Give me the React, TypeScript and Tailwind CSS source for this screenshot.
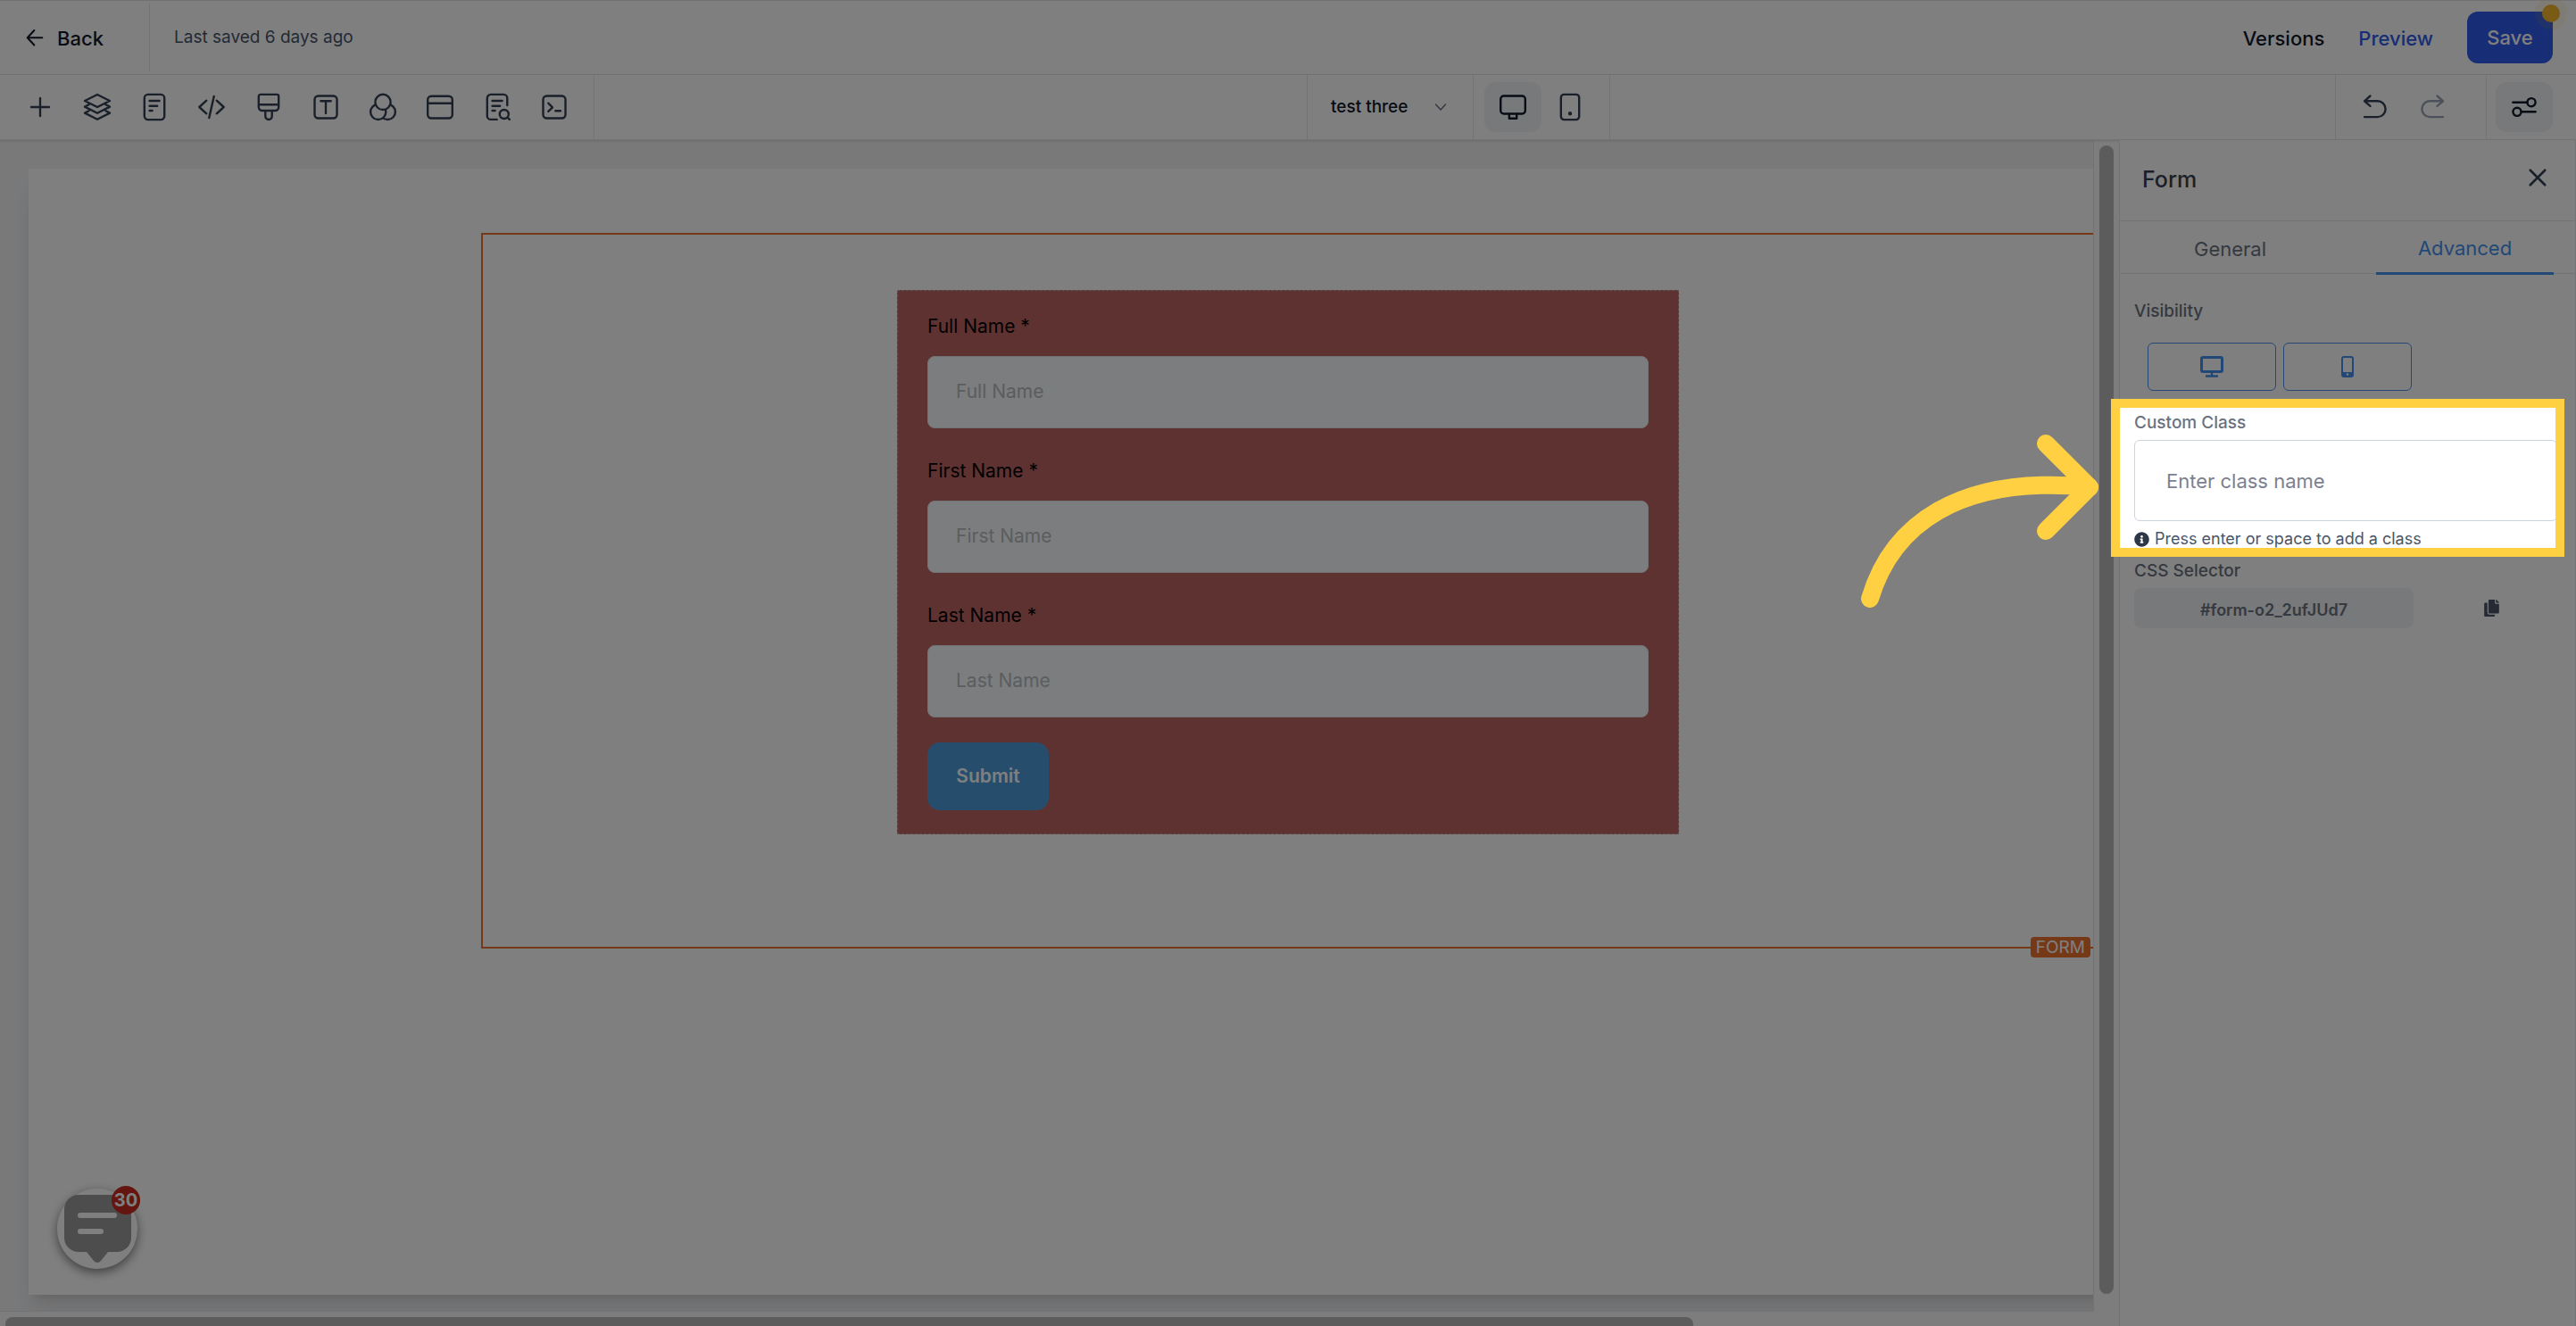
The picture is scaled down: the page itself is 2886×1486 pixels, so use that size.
import React, { useState } from 'react';
import { FaInfoCircle, FaCopy } from 'react-icons/fa';

const Icon = ({ children, className = 'w-8 h-8' }: { children: React.ReactNode; className?: string }) => (
  <svg
    viewBox="0 0 32 32"
    aria-hidden="true"
    className={className}
    fill="none"
    stroke="currentColor"
    strokeWidth="2.4"
    strokeLinecap="round"
    strokeLinejoin="round"
  >
    {children}
  </svg>
);

const tools = [
  { name: 'Add element', shape: <path d="M16 6v20M6 16h20" /> },
  {
    name: 'Layers',
    shape: (
      <path d="M16 2l14 7-14 7L2 9zM6.500 13.200L2 15.600l14 7.200 14-7.200-4.500-2.400M6.500 20.200L2 22.600l14 7.200 14-7.200-4.500-2.400" />
    )
  },
  {
    name: 'Pages',
    shape: (
      <>
        <rect x="4.800" y="1.900" width="22.400" height="28.200" rx="4" />
        <path d="M10.600 9h11M10.600 14.700h8.600M10.600 20h3" />
      </>
    )
  },
  {
    name: 'Code',
    shape: <path d="M10.300 8.700L2.300 16l8 7.300M21.700 8.700l8 7.300-8 7.300M18.700 4l-5.400 24" />
  },
  {
    name: 'Styles',
    shape: (
      <>
        <path d="M4.800 3.900a2 2 0 0 1 2-2h18.400a2 2 0 0 1 2 2V16a4 4 0 0 1-4 4H8.800a4 4 0 0 1-4-4zM4.800 13.300h22.400" />
        <path d="M12.300 20.200v6.100a3.700 3.700 0 0 0 7.400 0v-6.100" />
      </>
    )
  },
  {
    name: 'Typography',
    shape: (
      <>
        <rect x="3.500" y="3.500" width="25" height="25" rx="4" />
        <path d="M10.300 9.300h11.400M16 9.300v13.700" />
      </>
    )
  },
  {
    name: 'Colors',
    shape: (
      <g fill="white">
        <circle cx="21.300" cy="21.400" r="8.600" />
        <circle cx="10.700" cy="21.400" r="8.600" />
        <circle cx="16" cy="10.400" r="8.600" />
      </g>
    )
  },
  {
    name: 'Popups',
    shape: (
      <>
        <rect x="2.200" y="3.700" width="27.600" height="24.800" rx="4" />
        <path d="M2.200 11.700h27.600" />
      </>
    )
  },
  {
    name: 'SEO',
    shape: (
      <>
        <path d="M27.300 14V5.900a4 4 0 0 0-4-4H8.800a4 4 0 0 0-4 4v20a4 4 0 0 0 4 4h6.900" />
        <path d="M10.600 9h11M10.600 14.700h8.600M10.600 20h3" />
        <circle cx="23.800" cy="24" r="5" />
        <path d="M27.500 27.500l2.400 2.400" />
      </>
    )
  },
  {
    name: 'Console',
    shape: (
      <>
        <rect x="3.500" y="3.500" width="25" height="25" rx="4" />
        <path d="M9.300 11.700l4.700 4.600-4.700 4.600M17.300 20.300h5.700" />
      </>
    )
  }
];

const fields = ['Full Name', 'First Name', 'Last Name'];

function TopBar() {
  return (
    <header className="flex h-[84px] shrink-0 items-center justify-between border-t border-b border-t-neutral-200 border-b-gray-200 text-[22px] font-medium text-[#101828]">
      <div className="flex h-full items-center">
        <a href="#back" className="flex w-[167px] items-center gap-[14px] pt-[2px] pl-7">
          <Icon className="h-[22px] w-[22px]">
            <path strokeWidth="3" d="M28 15H4M15 3L4 15l11 12" />
          </Icon>
          Back
        </a>
        <span className="h-[76px] w-px bg-gray-200" />
        <span className="ml-[27px] text-[19px] font-normal text-[#475467]">Last saved 6 days ago</span>
      </div>
      <div className="flex items-center gap-[38px] pr-[26px]">
        <button className="pt-[2px]">Versions</button>
        <button className="pt-[2px] text-[#2e5bea]">Preview</button>
        <button className="relative h-[58px] w-24 rounded-xl bg-[#2e5bea] text-white">
          Save
          <span className="absolute -top-2 -right-2 h-5 w-5 rounded-full bg-[#f5b62d] ring-8 ring-[#f5b62d]/10" />
        </button>
      </div>
    </header>
  );
}

function Toolbar() {
  return (
    <div className="relative z-10 flex h-[73px] shrink-0 border-b border-gray-200 bg-white text-[#344054] shadow-sm">
      <div className="flex items-center gap-8 border-r border-gray-200 pr-7 pl-[29px]">
        {tools.map((tool) => (
          <button key={tool.name} aria-label={tool.name} className="h-8 w-8">
            <Icon>{tool.shape}</Icon>
          </button>
        ))}
      </div>
      <div className="flex-1" />
      <div className="mr-[14px] flex border-x border-gray-200">
        <div className="relative flex w-[186px] items-center border-r border-gray-200">
          <select
            aria-label="Page"
            className="h-full w-full appearance-none pl-[26px] text-[19px] font-medium text-[#101828] outline-none"
          >
            <option>test three</option>
          </select>
          <Icon className="pointer-events-none absolute right-7 h-4 w-4 text-[#667085]">
            <path strokeWidth="3" d="M5 10l11 12 11-12" />
          </Icon>
        </div>
        <div className="flex items-center px-3">
          <button
            aria-label="Desktop view"
            className="flex h-14 w-16 items-center justify-center rounded-xl bg-[#f0f3f7] text-[#101828]"
          >
            <Icon>
              <rect x="2.200" y="3.500" width="27.600" height="20" rx="3.500" />
              <path d="M11.800 23.700v5h8.400v-5" />
            </Icon>
          </button>
          <button aria-label="Mobile view" className="flex h-14 w-16 items-center justify-center">
            <Icon>
              <rect x="5.800" y="1.900" width="20.400" height="28.200" rx="3.500" />
              <circle cx="16" cy="23.300" r="1" fill="currentColor" />
            </Icon>
          </button>
        </div>
      </div>
      <div className="flex-1" />
      <div className="flex w-[169px] items-center justify-center gap-8 border-l border-gray-200 pr-4">
        <button aria-label="Undo">
          <Icon>
            <path d="M10.500 3.500L4 9.300l6.500 5.600M4 9.300h14.700a8.900 8.900 0 0 1 0 17.800H4" />
          </Icon>
        </button>
        <button aria-label="Redo" className="text-[#98a2b3]">
          <Icon>
            <path d="M21.500 3.500L28 9.300l-6.500 5.600M28 9.300H13.300a8.900 8.900 0 0 0 0 17.800H28" />
          </Icon>
        </button>
      </div>
      <div className="flex w-[101px] items-center justify-center border-l border-gray-200 pr-4">
        <button
          aria-label="Settings"
          className="flex h-14 w-16 items-center justify-center rounded-xl bg-[#f0f3f7] text-[#101828]"
        >
          <Icon>
            <path d="M3.300 10.700h16.200M12.500 21.300h16.200" />
            <circle cx="24" cy="10.700" r="4.600" />
            <circle cx="8" cy="21.300" r="4.600" />
          </Icon>
        </button>
      </div>
    </div>
  );
}

function Canvas() {
  return (
    <div className="flex min-w-0 flex-1 flex-col">
      <div className="min-h-0 flex-1 overflow-hidden border-r border-b border-gray-200 bg-[#f2f3f5]">
        <div className="h-full w-screen px-8 pt-8 pb-[18px]">
          <main className="flex h-full flex-col bg-white pt-[72px] shadow-xl">
            <div className="relative mx-auto w-full max-w-[1808px] border-2 border-[#ea7230] pt-[62px] pb-[126px]">
              <form className="mx-auto w-[876px] border border-dashed border-[#c0a0a0] bg-[#be6464] px-[33px] pt-6 pb-[26px] text-[21px]">
                {fields.map((field) => (
                  <div key={field} className="mb-8">
                    <label htmlFor={field} className="mb-[17px] block leading-8 text-black">
                      {field} *
                    </label>
                    <input
                      id={field}
                      placeholder={field}
                      className="block h-[81px] w-full rounded-lg border border-gray-200 bg-[#f8fafc] px-[31px] pb-[2px] placeholder:text-[#b6babf]"
                    />
                  </div>
                ))}
                <button type="button" className="-mt-1 block h-[76px] w-[136px] rounded-[14px] bg-[#4c9ad8] font-semibold text-white">
                  Submit
                </button>
              </form>
              <span className="absolute right-[3px] -bottom-3 h-[23px] rounded-sm bg-[#ea7230] px-[6px] text-[19px] leading-[23px] text-white">
                FORM
              </span>
            </div>
          </main>
        </div>
      </div>
      <div className="h-4 shrink-0 overflow-hidden bg-neutral-50 px-[6px] pt-[6px]">
        <div className="h-4 w-[81%] rounded-full bg-[#b8b8b8]" />
      </div>
    </div>
  );
}

function Spotlight() {
  return (
    <div className="pointer-events-none absolute -top-[13px] -right-2 -bottom-2 -left-[26px] border-10 border-[#ffd042] shadow-[0_0_0_9999px_rgba(0,0,0,0.5)]">
      <svg
        viewBox="0 0 290 200"
        aria-hidden="true"
        className="absolute top-6 -left-[300px] h-[200px] w-[290px]"
        fill="none"
        stroke="#ffd042"
        strokeWidth="20"
        strokeLinecap="round"
        strokeLinejoin="round"
      >
        <path d="M20 190C44 109 118 50 266 65" />
        <path d="M217 16l49 49-49 49" />
      </svg>
    </div>
  );
}

function Sidebar() {
  const [tab, setTab] = useState('Advanced');

  return (
    <aside className="relative z-20 w-[512px] shrink-0 border-x border-gray-200 bg-white text-[19px] text-[#6b7280]">
      <div className="flex h-[91px] items-center justify-between border-b border-gray-200 pr-[30px] pl-[25px] text-[#344054]">
        <h2 className="text-[25px] font-medium">Form</h2>
        <button aria-label="Close" className="pb-[6px]">
          <Icon className="h-6 w-6">
            <path strokeWidth="3.500" d="M5 5l22 22M27 5L5 27" />
          </Icon>
        </button>
      </div>
      <div className="flex h-[59px] justify-between border-b border-gray-200 px-6 text-[22px]">
        {['General', 'Advanced'].map((name) => (
          <button
            key={name}
            onClick={() => setTab(name)}
            className={
              tab === name
                ? '-mb-[2px] w-[199px] border-b-3 border-[#4390ee] pt-1 text-[#4390ee]'
                : 'w-[199px] pt-1 text-[#6b7280]'
            }
          >
            {name}
          </button>
        ))}
      </div>
      <div className="pt-7 pr-5 pl-4">
        <h3 className="leading-7 font-medium">Visibility</h3>
        <div className="mt-[21px] ml-[15px] flex gap-2 text-[#4390ee]">
          <button aria-label="Show on desktop" className="flex h-[54px] w-36 items-center justify-center rounded-md border border-[#4f90ea]">
            <svg viewBox="0 0 26 24" aria-hidden="true" className="h-6 w-[26px]" fill="none" stroke="currentColor" strokeWidth="3">
              <rect x="1.500" y="1.500" width="23" height="16" rx="1.500" />
              <path d="M13 18v4M6 22.500h14" strokeWidth="2.400" />
            </svg>
          </button>
          <button aria-label="Show on mobile" className="flex h-[54px] w-36 items-center justify-center rounded-md border border-[#4f90ea]">
            <svg viewBox="0 0 14 24" aria-hidden="true" className="h-6 w-[14px]">
              <rect x="1" y="1" width="12" height="22" rx="2" fill="none" stroke="currentColor" strokeWidth="2" />
              <path d="M1 18h12v4H1z" fill="currentColor" />
              <circle cx="7" cy="20.500" r="1.300" fill="white" />
            </svg>
          </button>
        </div>
        <div className="relative mt-[22px]">
          <label htmlFor="custom-class" className="block leading-7 font-medium">
            Custom Class
          </label>
          <input
            id="custom-class"
            placeholder="Enter class name"
            className="mt-[5px] block h-[91px] w-full rounded-md border border-[#cbd5e0] px-[35px] text-[22px] placeholder:text-[#7b8190]"
          />
          <p className="mt-2 flex items-center gap-[6px] text-lg leading-6 text-[#4a5568]">
            <FaInfoCircle className="h-[17px] w-[17px] text-[#2d3748]" />
            Press enter or space to add a class
          </p>
          <Spotlight />
        </div>
        <h3 className="mt-[10px] leading-7 font-medium">CSS Selector</h3>
        <div className="mt-[5px] flex items-center">
          <code className="h-[45px] w-[313px] rounded-lg bg-[#f0f3f7] pt-[2px] text-center font-[Inter,sans-serif] text-lg leading-[45px] font-semibold">
            #form-o2_2ufJUd7
          </code>
          <button aria-label="Copy selector" className="ml-[78px] text-[#4a5568]">
            <FaCopy className="h-[19px] w-[19px]" />
          </button>
        </div>
      </div>
    </aside>
  );
}

function ChatButton() {
  return (
    <button aria-label="Open chat" className="absolute bottom-16 left-16 h-[90px] w-[90px] rounded-full bg-white shadow-[0_4px_12px_rgba(0,0,0,0.5)]">
      <svg viewBox="0 0 90 90" aria-hidden="true" className="h-full w-full">
        <path
          fill="#9a9a9a"
          d="M24 7h43a16 16 0 0 1 16 16v32a16 16 0 0 1-16 16H57l-8 10q-4 4-8 0l-8-10H24A16 16 0 0 1 8 55V23A16 16 0 0 1 24 7z"
        />
        <path stroke="white" strokeWidth="6" strokeLinecap="round" d="M26 30h38M26 48h23" />
      </svg>
      <span className="absolute -top-[3px] -right-[3px] h-8 w-8 rounded-full bg-[#c92a1e] text-xl leading-8 font-bold text-white">30</span>
    </button>
  );
}

export default function App() {
  return (
    <div className="relative flex h-screen flex-col overflow-hidden bg-white font-[Inter,sans-serif]">
      <TopBar />
      <Toolbar />
      <div className="flex min-h-0 flex-1">
        <Canvas />
        <div className="flex w-7 shrink-0 justify-center bg-neutral-50 pt-[6px] pb-9">
          <div className="w-4 rounded-full bg-[#b8b8b8]" />
        </div>
        <Sidebar />
      </div>
      <ChatButton />
    </div>
  );
}
